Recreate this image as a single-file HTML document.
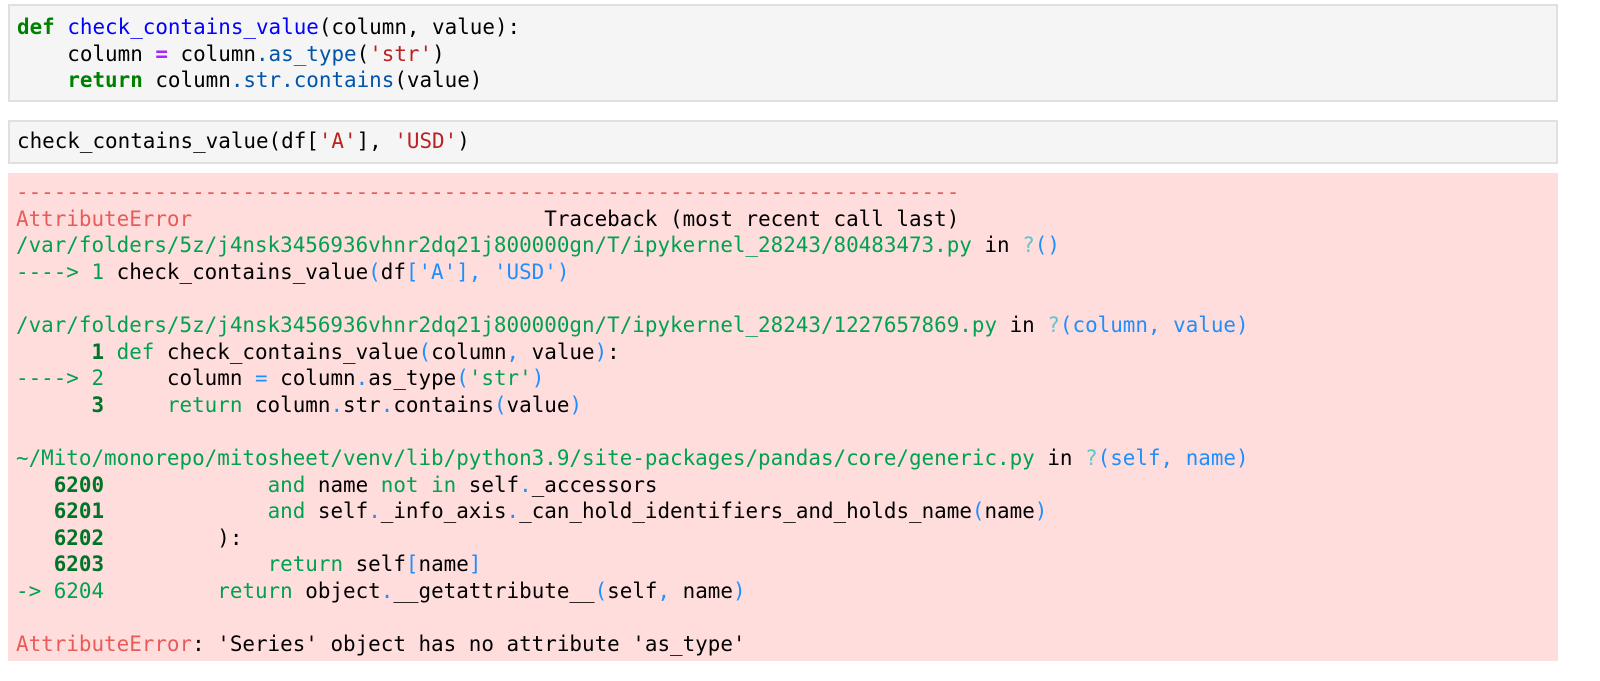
<!DOCTYPE html>
<html><head><meta charset="utf-8"><style>
body{margin:0;background:#fff;width:1600px;height:681px;overflow:hidden;font-family:"DejaVu Sans Mono","Liberation Mono",monospace;font-size:20.9px;color:#000}
.box{position:absolute;left:8px;width:1550px;box-sizing:border-box}
.cell{background:#f5f5f5;border:2px solid #e0e0e0}
pre{margin:0;font:inherit;line-height:26.6px;white-space:pre;letter-spacing:0}
.k{color:#008000;font-weight:bold}.f{color:#0000ff}.o{color:#aa22ff;font-weight:bold}.s{color:#ba2121}.a{color:#0055aa}
.r{color:#e75c58}.g{color:#00a250}.b{color:#208ffb}.c{color:#60c6c8}.n{color:#007427;font-weight:bold}
</style></head><body>
<div class="box cell" style="top:4px;height:98px;padding:8px 0 0 7px"><pre><span class="k">def</span> <span class="f">check_contains_value</span>(column, value):
    column <span class="o">=</span> column<span class="a">.as_type</span>(<span class="s">'str'</span>)
    <span class="k">return</span> column<span class="a">.str.contains</span>(value)</pre></div>
<div class="box cell" style="top:120px;height:44px;padding:6px 0 0 7px"><pre>check_contains_value(df[<span class="s">'A'</span>], <span class="s">'USD'</span>)</pre></div>
<div class="box" style="top:173px;height:488px;background:#fdd;padding:6px 0 0 8px"><pre><span class="r">---------------------------------------------------------------------------</span>
<span class="r">AttributeError</span>                            Traceback (most recent call last)
<span class="g">/var/folders/5z/j4nsk3456936vhnr2dq21j800000gn/T/ipykernel_28243/80483473.py</span> in <span class="c">?</span><span class="b">()</span>
<span class="g">----&gt; 1</span> check_contains_value<span class="b">(</span>df<span class="b">[</span><span class="b">'A'</span><span class="b">]</span><span class="b">,</span> <span class="b">'USD'</span><span class="b">)</span>

<span class="g">/var/folders/5z/j4nsk3456936vhnr2dq21j800000gn/T/ipykernel_28243/1227657869.py</span> in <span class="c">?</span><span class="b">(column, value)</span>
      <span class="n">1</span> <span class="g">def</span> check_contains_value<span class="b">(</span>column<span class="b">,</span> value<span class="b">)</span>:
<span class="g">----&gt; 2</span>     column <span class="b">=</span> column<span class="b">.</span>as_type<span class="b">(</span><span class="g">'str'</span><span class="b">)</span>
      <span class="n">3</span>     <span class="g">return</span> column<span class="b">.</span>str<span class="b">.</span>contains<span class="b">(</span>value<span class="b">)</span>

<span class="g">~/Mito/monorepo/mitosheet/venv/lib/python3.9/site-packages/pandas/core/generic.py</span> in <span class="c">?</span><span class="b">(self, name)</span>
   <span class="n">6200</span>             <span class="g">and</span> name <span class="g">not</span> <span class="g">in</span> self<span class="b">.</span>_accessors
   <span class="n">6201</span>             <span class="g">and</span> self<span class="b">.</span>_info_axis<span class="b">.</span>_can_hold_identifiers_and_holds_name<span class="b">(</span>name<span class="b">)</span>
   <span class="n">6202</span>         ):
   <span class="n">6203</span>             <span class="g">return</span> self<span class="b">[</span>name<span class="b">]</span>
<span class="g">-&gt; 6204</span>         <span class="g">return</span> object<span class="b">.</span>__getattribute__<span class="b">(</span>self<span class="b">,</span> name<span class="b">)</span>

<span class="r">AttributeError</span>: 'Series' object has no attribute 'as_type'</pre></div>
</body></html>
